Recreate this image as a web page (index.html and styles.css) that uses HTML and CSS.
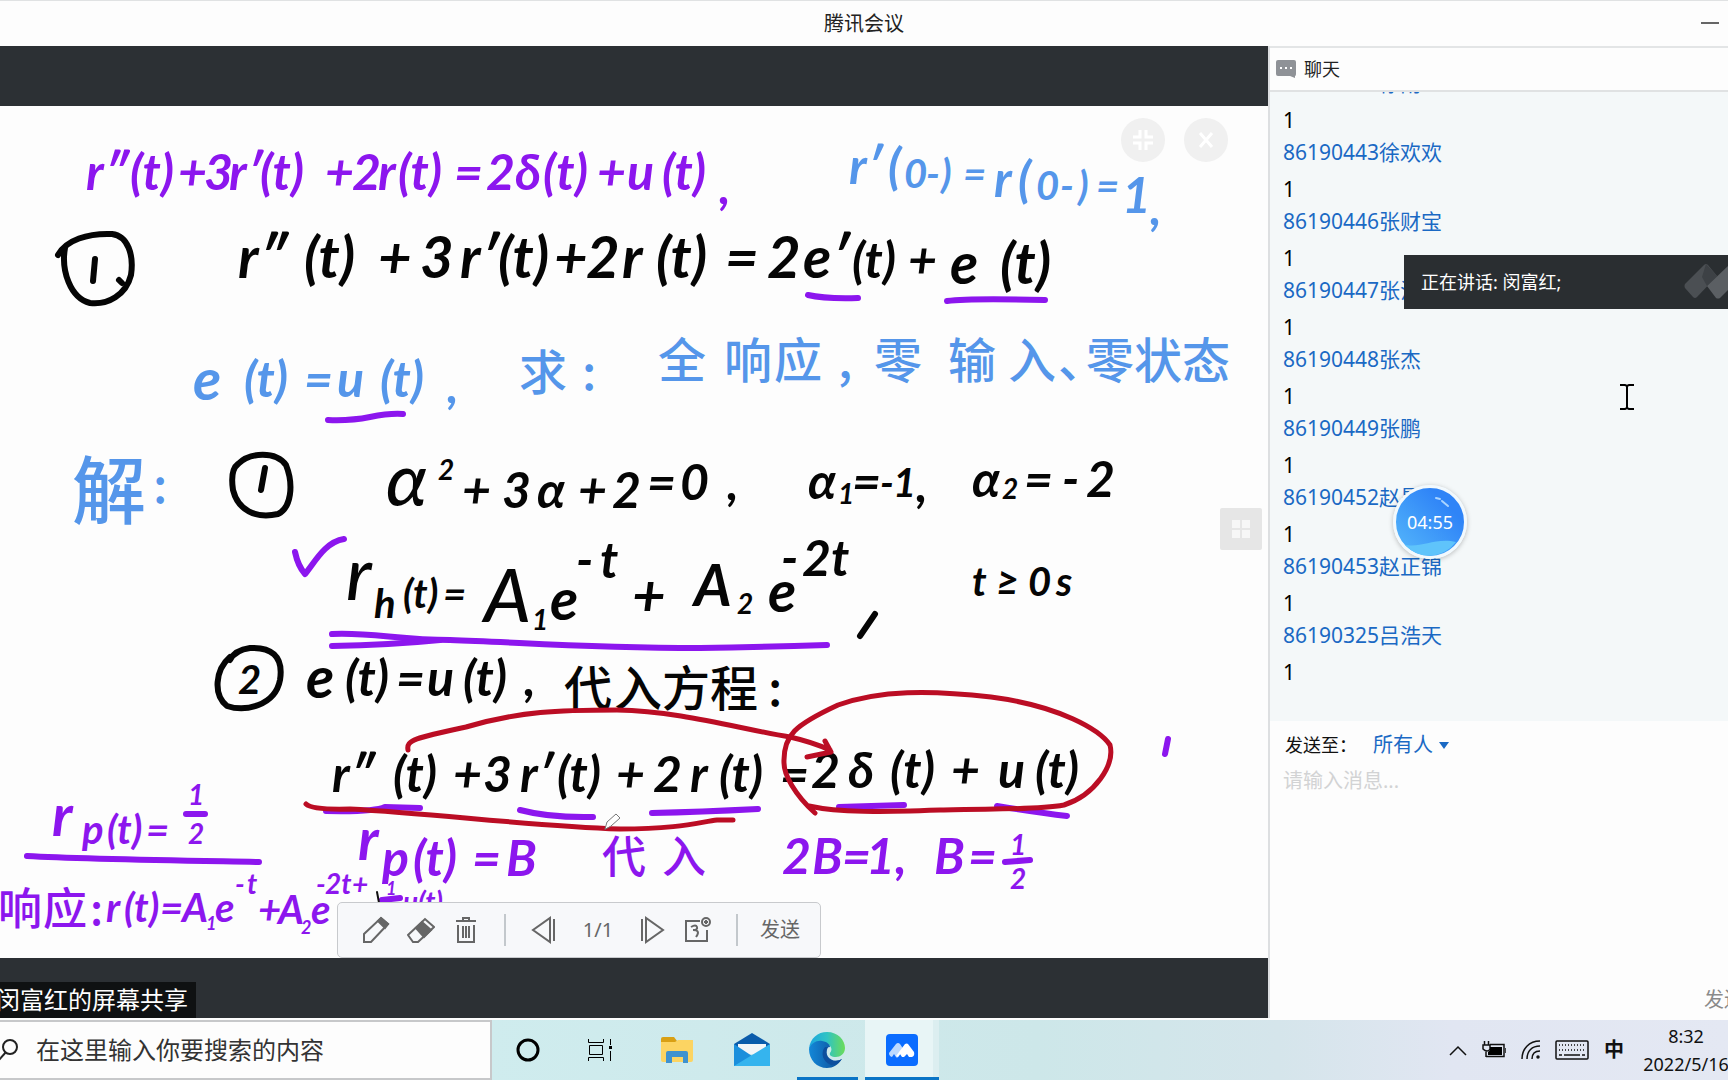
FILE: index.html
```html
<!doctype html>
<html lang="zh-CN">
<head>
<meta charset="utf-8">
<title>腾讯会议</title>
<link rel="stylesheet" href="styles.css">
</head>
<body>
<header class="titlebar">
	<h1>腾讯会议</h1>
	<button class="min" aria-label="最小化"></button>
</header>
<div class="main">
	<section class="stage">
		<div class="board">
			<svg class="ink" viewBox="0 106 1268 852" preserveAspectRatio="xMinYMin meet">
				<!-- 题目 -->
				<g class="purple">
					<text class="l" y="190"><tspan x="86">r″</tspan><tspan x="130">(t)</tspan><tspan x="178">+</tspan><tspan x="204">3</tspan><tspan x="229">r′</tspan><tspan x="260">(t)</tspan><tspan x="325">+</tspan><tspan x="352">2</tspan><tspan x="378">r</tspan><tspan x="398">(t)</tspan><tspan x="454">=</tspan><tspan x="486">2</tspan><tspan x="515">δ</tspan><tspan x="543">(t)</tspan><tspan x="597">+</tspan><tspan x="627">u</tspan><tspan x="662">(t)</tspan></text>
					<text class="l" x="719" y="204">,</text>
				</g>
				<g class="blue">
					<text class="l" y="184"><tspan x="849">r′</tspan><tspan x="888">(</tspan></text>
					<text class="m" y="188"><tspan x="904">0</tspan><tspan x="926">-</tspan><tspan x="941">)</tspan><tspan x="963">=</tspan></text>
					<text class="l" y="197"><tspan x="994">r</tspan><tspan x="1018">(</tspan></text>
					<text class="m" y="200"><tspan x="1036">0</tspan><tspan x="1060">-</tspan><tspan x="1078">)</tspan><tspan x="1096">=</tspan></text>
					<text class="l" y="213"><tspan x="1122">1</tspan></text>
					<text class="l" x="1150" y="225">,</text>
				</g>
				<g class="black">
					<path d="M58 255C66 240 88 233 112 234C128 236 134 255 131 275C126 295 108 305 90 303C70 298 61 270 65 248"/>
					<path d="M95 259L93 281"/>
					<path d="M119 280l3 3"/>
					<text class="xl" y="278"><tspan x="238">r″</tspan><tspan x="304">(t)</tspan><tspan x="378">+</tspan><tspan x="420">3</tspan><tspan x="460">r′</tspan><tspan x="498">(t)</tspan><tspan x="554">+</tspan><tspan x="586">2</tspan><tspan x="622">r</tspan><tspan x="656">(t)</tspan><tspan x="725">=</tspan><tspan x="767">2</tspan><tspan x="803">e′</tspan></text>
					<text class="l" y="278"><tspan x="852">(t)</tspan><tspan x="908">+</tspan></text>
					<text class="xl" y="284"><tspan x="950">e</tspan><tspan x="1000">(t)</tspan></text>
				</g>
				<path class="purple" d="M808 295Q825 299 858 298"/>
				<path class="purple" d="M947 301Q970 298 1045 300"/>
				<g class="blue">
					<text class="xl" x="193" y="400">e</text>
					<text class="l" y="397"><tspan x="244">(t)</tspan><tspan x="304">=</tspan><tspan x="337">u</tspan><tspan x="380">(t)</tspan></text>
					<text class="l" x="447" y="403">,</text>
					<text class="cjk" y="390"><tspan x="519">求</tspan><tspan x="582">:</tspan></text>
					<text class="cjk" y="378"><tspan x="658">全</tspan><tspan x="724">响</tspan><tspan x="774">应</tspan><tspan x="838">,</tspan><tspan x="874">零</tspan><tspan x="948">输</tspan><tspan x="1008">入</tspan><tspan x="1058">、</tspan><tspan x="1086">零</tspan><tspan x="1134">状</tspan><tspan x="1182">态</tspan></text>
				</g>
				<path class="purple" d="M328 420Q350 421 370 417T403 414"/>
				<!-- 第一步：齐次解 -->
				<g class="blue">
					<text class="cjk big" x="72" y="518">解</text>
					<text class="cjk" x="153" y="503">:</text>
				</g>
				<g class="black">
					<path d="M238 464C250 452 276 451 286 465C294 485 291 508 278 514C255 519 238 510 233 490Q230 470 238 464"/>
					<path d="M265 468L261 490"/>
					<text class="xl tall" x="386" y="506">α</text>
					<text class="s" x="438" y="480">2</text>
					<text class="l" y="508"><tspan x="462">+</tspan><tspan x="502">3</tspan><tspan x="537">α</tspan><tspan x="578">+</tspan><tspan x="612">2</tspan></text>
					<text class="l" y="500"><tspan x="647">=</tspan><tspan x="680">0</tspan><tspan x="727">,</tspan></text>
					<text class="l" y="499"><tspan x="808">α</tspan><tspan x="852">=</tspan></text>
					<text class="m" y="497"><tspan x="880">-</tspan><tspan x="893">1</tspan></text>
					<text class="s" x="838" y="504">1</text>
					<text class="l" x="916" y="502">,</text>
					<text class="l" y="497"><tspan x="972">α</tspan><tspan x="1024">=</tspan><tspan x="1062">-</tspan><tspan x="1086">2</tspan></text>
					<text class="s" x="1002" y="499">2</text>
				</g>
				<path class="purple" d="M295 552Q298 566 305 574C315 562 325 542 344 539"/>
				<g class="black">
					<text class="xl tall" x="346" y="600">r</text>
					<text class="m" x="374" y="618">h</text>
					<text class="m" y="608"><tspan x="403">(t)</tspan><tspan x="443">=</tspan></text>
					<text class="xl tall" x="484" y="622">A</text>
					<text class="s" x="532" y="630">1</text>
					<text class="xl" x="550" y="620">e</text>
					<text class="l" y="578"><tspan x="576">-</tspan><tspan x="600">t</tspan></text>
					<text class="xl" x="632" y="616">+</text>
					<text class="xl" x="694" y="606">A</text>
					<text class="s" x="737" y="614">2</text>
					<text class="xl" x="768" y="612">e</text>
					<text class="l" y="576"><tspan x="781">-</tspan><tspan x="802">2t</tspan></text>
					<path d="M875 614L860 636"/>
					<text class="m" y="596"><tspan x="972">t</tspan><tspan x="996">≥</tspan><tspan x="1028">0</tspan><tspan x="1056">s</tspan></text>
				</g>
				<path class="purple" d="M332 634C370 632 400 640 450 640C520 642 580 648 700 648Q760 647 827 645"/>
				<path class="purple" d="M332 646Q390 645 440 640"/>
				<!-- 第二步：代入方程 -->
				<g class="black">
					<path d="M230 657C215 670 213 695 227 706C245 712 275 706 280 680C284 655 270 647 250 648Q235 650 230 660"/>
					<text class="m" x="238" y="694">2</text>
					<text class="xl" x="306" y="698">e</text>
					<text class="l" y="696"><tspan x="345">(t)</tspan><tspan x="396">=</tspan><tspan x="427">u</tspan><tspan x="463">(t)</tspan><tspan x="524">,</tspan></text>
					<text class="cjk" y="706"><tspan x="564">代</tspan><tspan x="614">入</tspan><tspan x="662">方</tspan><tspan x="710">程</tspan><tspan x="768">:</tspan></text>
					<text class="l" y="792"><tspan x="332">r″</tspan><tspan x="393">(t)</tspan><tspan x="453">+</tspan><tspan x="483">3</tspan><tspan x="520">r′</tspan><tspan x="557">(t)</tspan><tspan x="616">+</tspan><tspan x="653">2</tspan><tspan x="690">r</tspan><tspan x="719">(t)</tspan><tspan x="780">=</tspan></text>
					<text class="l" y="788"><tspan x="811">2</tspan><tspan x="848">δ</tspan><tspan x="890">(t)</tspan><tspan x="951">+</tspan><tspan x="998">u</tspan><tspan x="1035">(t)</tspan></text>
				</g>
				<path class="purple" d="M326 811Q375 812 385 807L420 808"/>
				<path class="purple" d="M520 810Q550 818 593 817"/>
				<path class="purple" d="M652 813Q700 812 758 809"/>
				<path class="purple" d="M839 807L904 805"/>
				<path class="purple" d="M997 806Q1040 813 1067 816"/>
				<path class="purple" d="M1168 739L1165 754"/>
				<g class="red">
					<path d="M408 750C406 740 415 738 466 727C520 711 560 710 617 710C680 711 740 729 790 737Q812 742 830 750M825 741L831 752L807 757"/>
					<path d="M815 813C795 795 784 775 784 763C783 735 795 725 838 705C880 690 930 690 991 697C1060 706 1100 730 1110 745C1115 765 1095 795 1064 805C1030 811 980 808 940 810C880 812 840 813 809 806"/>
					<path d="M306 804Q312 810 350 809C440 814 530 826 620 829C680 829 700 822 717 820L733 820"/>
				</g>
				<!-- 特解与结论 -->
				<g class="purple">
					<text class="xl" x="358" y="860">r</text>
					<text class="l" x="382" y="876">p</text>
					<text class="l" y="876"><tspan x="413">(t)</tspan><tspan x="472">=</tspan><tspan x="506">B</tspan></text>
					<text class="m cjk" y="873"><tspan x="602">代</tspan><tspan x="662">入</tspan></text>
					<text class="l" y="874"><tspan x="782">2</tspan><tspan x="812">B</tspan></text>
					<text class="l" y="874"><tspan x="842">=</tspan><tspan x="866">1</tspan><tspan x="895">,</tspan><tspan x="934">B</tspan><tspan x="968">=</tspan></text>
					<text class="s" x="1010" y="855">1</text>
					<path d="M1005 862L1030 860"/>
					<text class="s" x="1010" y="889">2</text>
					<text class="xl" x="52" y="836">r</text>
					<text class="m" y="844"><tspan x="82">p</tspan><tspan x="107">(t)</tspan><tspan x="146">=</tspan></text>
					<text class="s" x="188" y="805">1</text>
					<path d="M186 814L205 814"/>
					<text class="s" x="188" y="844">2</text>
					<path d="M27 856C80 859 150 860 259 862"/>
					<text class="m cjk" y="925"><tspan x="-2">响</tspan><tspan x="43">应</tspan><tspan x="90">:</tspan></text>
					<text class="m" y="922"><tspan x="106">r</tspan><tspan x="124">(t)</tspan><tspan x="160">=</tspan><tspan x="182">A</tspan><tspan x="215">e</tspan></text>
					<text class="xs" x="206" y="930">1</text>
					<text class="s" y="894"><tspan x="235">-</tspan><tspan x="247">t</tspan></text>
					<text class="m" y="924"><tspan x="258">+</tspan><tspan x="278">A</tspan><tspan x="311">e</tspan></text>
					<text class="xs" x="301" y="934">2</text>
					<text class="s" y="894"><tspan x="316">-</tspan><tspan x="325">2t</tspan><tspan x="352">+</tspan></text>
					<text class="xs" x="386" y="895">1</text>
					<path d="M382 900L400 898"/>
					<text class="s" x="403" y="912">u(t)</text>
				</g>
				<path class="thin" d="M377 892L380 908"/>
				<!-- 画笔光标 -->
				<path class="pen" d="M605 829l2-7 9-8 4 4-9 8z"/>
			</svg>
			<div class="board-top">
				<button aria-label="退出全屏"><svg width="24" height="24" viewBox="0 0 24 24"><path d="M9 2v7H2M15 2v7h7M9 22v-7H2M15 22v-7h7"/></svg></button>
				<button aria-label="关闭"><svg width="24" height="24" viewBox="0 0 24 24"><path d="M6 5l12 14M18 5L6 19"/></svg></button>
			</div>
			<button class="board-grid" aria-label="缩略图"><svg width="20" height="20" viewBox="0 0 20 20"><path d="M1 1h8v8H1zM11 1h8v8h-8zM1 11h8v8H1zM11 11h8v8h-8z"/></svg></button>
			<div class="tools">
				<div class="group">
					<button aria-label="画笔"><svg width="28" height="28" viewBox="0 0 28 28"><path d="M2 26v-8L19 2l7 6L9 26z"/><path class="fill" d="M19 2l7 6-3 4-7-7z"/></svg></button>
					<button aria-label="橡皮"><svg width="28" height="28" viewBox="0 0 28 28"><path d="M1 19L18 3l9 8L11 26H6z"/><path class="fill" d="M9 12l6-6 9 8-7 7z"/></svg></button>
					<button aria-label="删除"><svg width="28" height="28" viewBox="0 0 28 28"><path d="M4 5h20M11 5V2h6v3M6 9v17h16V9M11 10v12M14 10v12M17 10v12"/></svg></button>
				</div>
				<i class="sep"></i>
				<div class="group pages">
					<button aria-label="上一页"><svg width="28" height="28" viewBox="0 0 28 28"><path d="M20 2v24L3 14zM24 3v22"/></svg></button>
					<span>1/1</span>
					<button aria-label="下一页"><svg width="28" height="28" viewBox="0 0 28 28"><path d="M8 2v24l17-12zM4 3v22"/></svg></button>
					<button class="add" aria-label="新建页"><svg width="28" height="28" viewBox="0 0 28 28"><path d="M16 5H2v20h21V14"/><path d="M7 11q5-3 6 0t-4 3c6 0 6 3 3 7"/><circle cx="22" cy="6" r="4"/><path d="M22 4v4M20 6h4"/></svg></button>
				</div>
				<i class="sep"></i>
				<button>发送</button>
			</div>
		</div>
		<div class="share-tag">闵富红的屏幕共享</div>
	</section>
	<aside class="chat">
		<h2><svg width="20" height="18" viewBox="0 0 20 18"><path fill="#8f9297" d="M2 0h16q2 0 2 2v12q0 2-1 2v2l-5-2H2q-2 0-2-2V2q0-2 2-2z"/><path fill="#fff" d="M4 7h2v2H4zM9 7h2v2H9zM14 7h2v2h-2z"/></svg>聊天</h2>
		<ul>
			<li><b>86190442徐雨</b><p>1</p></li>
			<li><b>86190443徐欢欢</b><p>1</p></li>
			<li><b>86190446张财宝</b><p>1</p></li>
			<li><b>86190447张洪</b><p>1</p></li>
			<li><b>86190448张杰</b><p>1</p></li>
			<li><b>86190449张鹏</b><p>1</p></li>
			<li><b>86190452赵昊</b><p>1</p></li>
			<li><b>86190453赵正锦</b><p>1</p></li>
			<li><b>86190325吕浩天</b><p>1</p></li>
		</ul>
		<form>
			<div class="to">
				<label for="to">发送至：</label>
				<select id="to"><option>所有人</option></select>
				<svg width="10" height="7" viewBox="0 0 10 7"><path fill="#1a69c4" d="M0 0h10L5 7z"/></svg>
			</div>
			<textarea aria-label="消息" placeholder="请输入消息..."></textarea>
			<button class="send" type="button">发送</button>
		</form>
	</aside>
</div>
<footer class="taskbar">
	<label class="search">
		<svg width="20" height="24" viewBox="0 0 20 24"><circle cx="10" cy="9" r="7"/><path d="M6 14l-8 9"/></svg>
		<input type="text" placeholder="在这里输入你要搜索的内容">
	</label>
	<nav>
		<button class="sys" aria-label="Cortana"><svg width="26" height="26" viewBox="0 0 26 26"><circle cx="13" cy="13" r="10" fill="none" stroke="#000" stroke-width="3"/></svg></button>
		<button class="sys" aria-label="任务视图"><svg width="26" height="26" viewBox="0 0 26 26"><path fill="none" stroke="#000" stroke-width="1" d="M1.500 2v3.500h15V2M1.500 24v-3.500h15V24M2.500 8.500h13v9h-13zM23.500 2v6M23.500 14v10"/><path d="M22 9h3v3h-3z"/></svg></button>
		<button class="app first" aria-label="文件资源管理器"><svg width="34" height="30" viewBox="0 0 34 30"><path fill="#d9a014" d="M1 4q0-2 2-2h11l3 4v4H1z"/><path fill="#fcd462" d="M1 7h14l3-2h15v20q0 2-2 2H3q-2 0-2-2z"/><path fill="#3f92cf" d="M6 28V18q0-2 2-2h18q2 0 2 2v10h-5v-6H12v6z"/></svg></button>
		<button class="app" aria-label="邮件"><svg width="36" height="36" viewBox="0 0 36 36"><path fill="#0b5cab" d="M0 12L18 1l18 11v6H0z"/><path fill="#f4f6f8" d="M4 12h28v10H4z"/><path fill="#1b8fdc" d="M0 12l18 12v10H0z"/><path fill="#35b4ee" d="M36 12L0 34h36z"/></svg></button>
		<button class="app open" aria-label="Edge"><svg width="36" height="36" viewBox="0 0 36 36">
			<defs>
				<linearGradient id="eg" x1="0" x2="1"><stop offset="0" stop-color="#1ba5e0"/><stop offset=".5" stop-color="#2fc3c4"/><stop offset="1" stop-color="#6cdc58"/></linearGradient>
				<linearGradient id="eb" x1="0" x2="1"><stop offset="0" stop-color="#1488d8"/><stop offset="1" stop-color="#0c4a94"/></linearGradient>
			</defs>
			<path fill="url(#eg)" d="M0 17C1 6 9 0 18 0c11 0 18 8 18 16 0 6-5 9-9 9-5 0-7-2-6-4 4-5-1-10-7-10-6 0-12 3-14 6z"/>
			<path fill="url(#eb)" d="M0 17c2-6 8-9 13-8 6 1 8 4 8 6-7 0-7 14 4 14 4 0 6-1 8-2-4 6-9 9-15 9C8 36 0 28 0 17z"/>
			<path fill="#0d4f9e" d="M16 15c-5 6-2 15 6 18 4 0 8-2 11-6-9 5-19-2-14-12z"/>
		</svg></button>
		<button class="app open on" aria-label="腾讯会议"><svg width="32" height="32" viewBox="0 0 32 32"><rect width="32" height="32" rx="4" fill="#0a6cff"/><path fill="#bcd9ff" d="M3 19l7-9q2-2 4 0l4 6-6 7q-1 1-2 0l-2-3-2 3q-3-1-3-4z"/><path fill="#fff" d="M10 22l9-12q2-1 3 0l6 8q1 4-2 5h-3l-2-3-3 3h-2l-2-3-2 3z"/></svg></button>
	</nav>
	<div class="tray">
		<svg class="up" width="18" height="12" viewBox="0 0 18 12"><path d="M1 11l8-8 8 8"/></svg>
		<svg class="battery" width="24" height="18" viewBox="0 0 24 18"><path d="M8 3.500h14v12H4M24 7v5M2.500 0v4M6.500 0v4M1 4h7v4q-1 2-3 2t-4-2zM4 10v6"/><path fill="#000" stroke="none" d="M8 6h12v8H6v-3l2-2z"/></svg>
		<svg class="wifi" width="20" height="20" viewBox="0 0 20 20"><path d="M1 19C1 9 8 1 19 1M6 19C6 11 11 6 19 6M11 19q0-8 8-8"/><circle cx="17" cy="17" r="1" fill="#000"/></svg>
		<svg class="keyboard" width="34" height="20" viewBox="0 0 34 20"><rect x="1" y="1" width="32" height="18" rx="1"/><path stroke-dasharray="1 2" d="M4 5h26M4 10h26"/><path d="M4 15h3M9 15h16M27 15h3"/></svg>
		<span class="ime">中</span>
		<div class="clock"><time>8:32</time><time>2022/5/16</time></div>
	</div>
</footer>
<!-- 悬浮窗 -->
<div class="speaking">
	<span>正在讲话: 闵富红;</span>
	<svg width="44" height="36" viewBox="0 0 44 36"><path fill="#4b4f53" d="M1 20L20 1q2-2 4 0l9 11-20 21q-2 2-4 0l-8-9q-1-2 0-4z"/><path fill="#5b5f63" d="M23 22L44 2v24l-8 8q-2 1-4 0z"/><path fill="#3d4145" d="M22 0l11 12-10 10-5-9z"/></svg>
</div>
<div class="timer"><svg width="68" height="68" viewBox="0 0 68 68"><path fill="#5fc4fb" d="M7 56C22 62 38 49 60 54A34 34 0 0 1 7 56z"/><path fill="none" stroke="#a9d4ff" stroke-width="2" stroke-linecap="round" d="M40 10l4 1M46 13l6 5"/></svg><span>04:55</span></div>
<svg class="caret" width="14" height="26" viewBox="0 0 14 26"><path d="M0 1h5l2 1 2-1h5M7 2v22M0 25h5l2-1 2 1h5"/></svg>
</body>
</html>
```
FILE: styles.css
```css
*{margin:0; padding:0; box-sizing:border-box; list-style:none;}
body{height:100vh; display:flex; flex-direction:column; overflow:hidden; position:relative; background:#fdfdfd; font-family:"Noto Sans","Noto Sans CJK SC",sans-serif; color:#111;}
button,input,select,textarea{border:0; background:none; font:inherit; color:inherit; outline:0;}
svg{display:block;}

.titlebar{height:46px; flex:none; display:flex; align-items:center; justify-content:center; border-top:1px solid #e0e2e3; position:relative;}
.titlebar h1{font-size:20px; line-height:28px; font-weight:400; color:#222;}
.min{position:absolute; right:9px; top:21px; width:18px; height:2px; background:#666;}

.main{flex:1; min-height:0; display:flex; padding-bottom:2px;}
.stage{flex:1; min-width:0; background:#2c3034; padding:60px 0; display:flex; flex-direction:column; position:relative;}
.board{flex:1; min-height:0; background:#fdfdfd; position:relative; overflow:hidden;}
.ink{width:100%; height:100%;}
.ink path{fill:none; stroke-width:6; stroke-linecap:round; stroke-linejoin:round;}
.ink text{font-family:Lato,"DejaVu Sans","Noto Sans CJK SC",sans-serif; font-weight:700; font-style:italic;}
.ink .xs{font-size:18px;}
.ink .s{font-size:28px;}
.ink .m{font-size:40px;}
.ink .l{font-size:50px;}
.ink .xl{font-size:58px;}
.ink .tall{font-size:74px; font-weight:500;}
.ink .cjk{font-family:"Noto Sans CJK SC",sans-serif; font-size:48px; font-weight:500; font-style:normal;}
.ink .m.cjk{font-size:44px;}
.ink .big{font-size:74px;}
.purple text{fill:#8c16ee;}
.purple path,path.purple{stroke:#8c16ee;}
.blue text{fill:#5596ea;}
.black text{fill:#050505;}
.black path{stroke:#050505;}
.ink .red path{stroke:#bb0d24; stroke-width:5;}
.ink .thin{stroke:#111; stroke-width:2;}
.ink .pen{fill:#fff; stroke:#777; stroke-width:1;}

.board-top{position:absolute; top:12px; right:40px; display:flex; gap:19px;}
.board-top button{width:44px; height:44px; border-radius:50%; background:#f0f0f0; display:flex; align-items:center; justify-content:center;}
.board-top path{fill:none; stroke:#fff; stroke-width:3;}
.board-grid{position:absolute; right:6px; top:402px; width:42px; height:42px; border-radius:2px; background:#e6e6e6; display:flex; align-items:center; justify-content:center;}
.board-grid path{fill:#f7f7f7;}

.tools{position:absolute; left:337px; bottom:0; height:56px; padding:0 20px 0 24px; display:flex; align-items:center; background:#f7f8fa; border:1px solid #c8cacd; border-radius:5px; color:#666; font-size:20px; line-height:28px;}
.group{display:flex; align-items:center; gap:17px;}
.pages{gap:0;}
.pages span{width:80px; text-align:center;}
.pages .add{margin-left:18px;}
.tools path,.tools circle{fill:none; stroke:#666; stroke-width:2;}
.tools .fill{fill:#666;}
.sep{width:2px; height:32px; margin:0 24px; background:#c3c8cc;}
.pages + .sep{margin:0 22px 0 24px;}
.share-tag{position:absolute; left:-4px; bottom:0; padding-right:8px; background:#0f1112; color:#fff; font-size:24px; line-height:36px;}

.chat{width:460px; flex:none; display:flex; flex-direction:column; border-left:2px solid #dddfe1; overflow:hidden;}
.chat h2{height:46px; flex:none; display:flex; align-items:center; gap:8px; padding-left:6px; border-top:2px solid #e3e5e6; border-bottom:2px solid #e0e2e3; font-size:18px; line-height:26px; font-weight:400; color:#222;}
.chat ul{flex:1; min-height:0; overflow:hidden; display:flex; flex-direction:column; justify-content:flex-end; padding:0 13px 33px; background:#f4f8f9; font-size:21px; line-height:32px;}
.chat li{flex:none;}
.chat b{display:block; font-weight:400; color:#1a69c4;}
.chat p{margin-top:5px; color:#000;}
.chat form{height:297px; flex:none; display:flex; flex-direction:column; padding:10px 12px 4px 13px;}
.to{display:flex; align-items:center; font-size:18px; line-height:28px; padding-left:2px;}
.to label{width:88px; flex:none;}
.to select{appearance:none; font-size:20px; color:#1a69c4; margin-right:6px;}
.chat textarea{flex:1; resize:none; margin-top:8px; font-size:20px; line-height:28px;}
.chat textarea::placeholder{color:#d2d3d4;}
.send{align-self:flex-end; margin-right:-28px; font-size:20px; line-height:28px; color:#8a8a8a;}

.taskbar{height:60px; flex:none; display:flex; background:linear-gradient(90deg,#cfecee 28%,#cde7e9 60%,#d5e5eb 74%,#e1e6f2 84%,#e4e8f3);}
.search{width:492px; flex:none; display:flex; align-items:center; gap:16px; background:#fdfdfd; border:2px solid #c7c8ca; border-left:0; font-size:24px;}
.search svg{fill:none; stroke:#222; stroke-width:2; flex:none;}
.search input{flex:1; min-width:0; line-height:36px;}
.search input::placeholder{color:#333;}
.taskbar nav{display:flex;}
.taskbar nav button{display:flex; align-items:center; justify-content:center;}
.sys{width:72px;}
.taskbar .app{width:74px; margin-right:1px; position:relative;}
.first{margin-left:4px;}
.open:after{content:""; position:absolute; left:7px; right:6px; bottom:0; height:3px; background:#0a74c6;}
.on{background:#e8f5f6; box-shadow:inset -6px 0 #dceef0;}
.on:after{left:0; right:0;}
.tray{margin-left:auto; display:flex; align-items:center;}
.tray svg{fill:none; stroke:#111; stroke-width:1.5;}
.battery{margin-left:15px;}
.wifi{margin-left:15px;}
.keyboard{margin-left:14px;}
.ime{margin-left:15px; font-size:20px; font-weight:700; line-height:28px;}
.clock{width:104px; display:flex; flex-direction:column; align-items:center; font-size:18px; line-height:28px; padding-left:20px;}

.speaking{position:absolute; right:0; top:255px; width:324px; height:54px; padding-left:17px; display:flex; align-items:center; justify-content:space-between; background:#2a2e31; color:#fff; font-size:18px; line-height:26px;}
.timer{position:absolute; right:261px; top:485px; width:74px; height:74px; border:3px solid #f2f9fd; border-radius:50%; background:linear-gradient(45deg,#56b9fb,#2f84f7 75%); box-shadow:0 1px 5px rgba(0,0,0,.25); color:#fff; font-size:18px; line-height:68px; text-align:center; overflow:hidden;}
.timer svg{position:absolute; left:0; top:0;}
.timer span{position:relative;}
.caret{position:absolute; right:94px; top:384px; fill:none; stroke:#000; stroke-width:2;}
```
